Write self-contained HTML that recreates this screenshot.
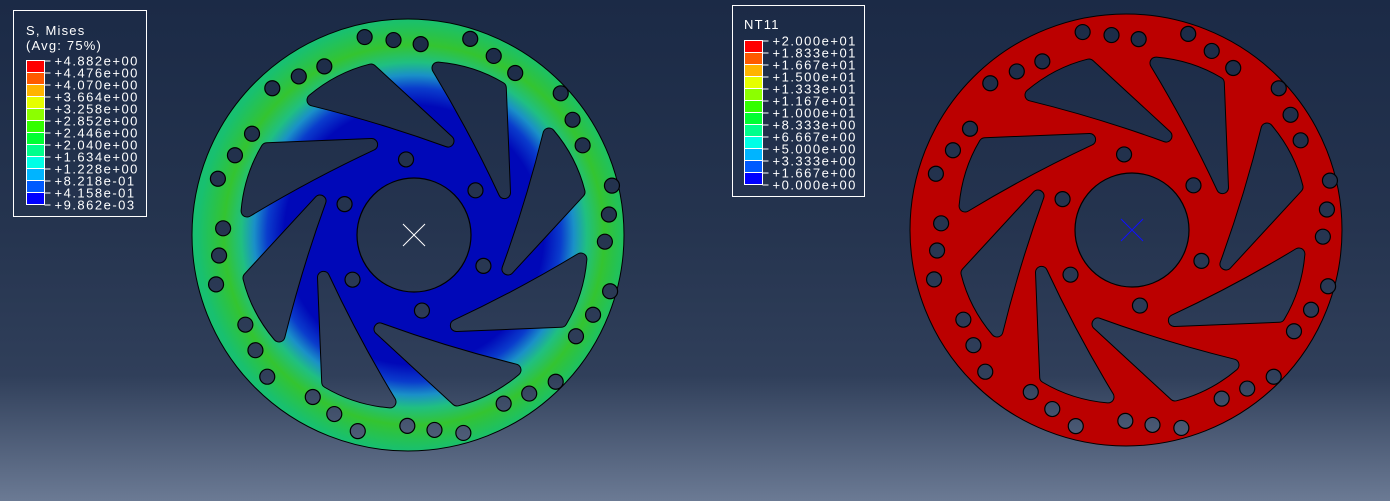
<!DOCTYPE html>
<html><head><meta charset="utf-8">
<style>
html,body{margin:0;padding:0;width:1390px;height:501px;overflow:hidden;}
body{background:linear-gradient(#1b2a46 0%,#25344f 45%,#303f5a 75%,#6b7a94 100%);font-family:"Liberation Sans",sans-serif;}
svg{position:absolute;left:0;top:0;}
</style></head><body>
<svg id="s" width="1390" height="501" xmlns="http://www.w3.org/2000/svg">
<defs>
<linearGradient id="bg" gradientUnits="userSpaceOnUse" x1="0" y1="0" x2="0" y2="501">
<stop offset="0" stop-color="#1b2a46"/><stop offset="0.45" stop-color="#25344f"/><stop offset="0.75" stop-color="#303f5a"/><stop offset="1" stop-color="#6b7a94"/>
</linearGradient>
<radialGradient id="fe" cx="414" cy="235" r="216" gradientUnits="userSpaceOnUse">
<stop offset="0" stop-color="#0008b8"/><stop offset="0.6" stop-color="#0008b8"/><stop offset="0.68" stop-color="#0a3ccc"/><stop offset="0.74" stop-color="#1a90c8"/><stop offset="0.8" stop-color="#20c080"/><stop offset="0.88" stop-color="#34c430"/><stop offset="1" stop-color="#18c070"/>
</radialGradient>
</defs>
<g font-size="13" fill="#fff" font-family="Liberation Sans, sans-serif" letter-spacing="1.2">
<rect x="13.5" y="10.5" width="133" height="206" fill="none" stroke="#fff"/>
<text x="26" y="35">S, Mises</text><text x="26" y="50">(Avg: 75%)</text>
<rect x="732.5" y="5.5" width="132" height="191" fill="none" stroke="#fff"/>
<text x="744" y="29">NT11</text>
</g>
<g id="L"></g>
</svg>
<script>
var s=document.getElementById('L'),NS='http://www.w3.org/2000/svg';
function el(t,a){var e=document.createElementNS(NS,t);for(var k in a)e.setAttribute(k,a[k]);s.appendChild(e);return e;}
var cols=['#ff0000','#ff5a00','#ffb400','#e6ff00','#8cff00','#32ff00','#00ff32','#00ff8c','#00ffe6','#00b4ff','#005aff','#0000ff'];
function legend(x,y,labels){
 for(var i=0;i<12;i++){el('rect',{x:x,y:y+i*12,width:18,height:12,fill:cols[i],stroke:'#fff','stroke-width':1});}
 for(var i=0;i<13;i++){el('line',{x1:x+18,y1:y+i*12+.5,x2:x+24,y2:y+i*12+.5,stroke:'#fff'});
  var t=el('text',{x:x+28,y:y+i*12+5,fill:'#fff','font-size':'13','font-family':'Liberation Sans, sans-serif','letter-spacing':'1.5'});t.textContent=labels[i];}
}
legend(26.5,60.5,['+4.882e+00','+4.476e+00','+4.070e+00','+3.664e+00','+3.258e+00','+2.852e+00','+2.446e+00','+2.040e+00','+1.634e+00','+1.228e+00','+8.218e-01','+4.158e-01','+9.862e-03']);
legend(744.5,40.5,['+2.000e+01','+1.833e+01','+1.667e+01','+1.500e+01','+1.333e+01','+1.167e+01','+1.000e+01','+8.333e+00','+6.667e+00','+5.000e+00','+3.333e+00','+1.667e+00','+0.000e+00']);
function rot(p,a){var c=Math.cos(a),n=Math.sin(a);return [p[0]*c-p[1]*n,p[0]*n+p[1]*c];}
function disc(cx,cy,ox,fill,xc){
 el('circle',{cx:ox,cy:cy,r:216,fill:fill,stroke:'#000','stroke-width':1});
 var pts=[[-43,-165],[34,-94],[-32,-118],[-101,-135],[-75,-157]];
 for(var k=0;k<8;k++){var a=k*Math.PI/4;
  var q=pts.map(function(p){var r=rot(p,a);return (cx+r[0]).toFixed(1)+' '+(cy+r[1]).toFixed(1);});
  var d='M'+q[0]+'L'+q[1]+'Q'+q[2]+' '+q[3]+'Q'+q[4]+' '+q[0]+'Z';
  el('path',{d:d,fill:'none',stroke:'#000','stroke-width':13,'stroke-linejoin':'round'});
  el('path',{d:d,fill:'url(#bg)',stroke:'url(#bg)','stroke-width':11,'stroke-linejoin':'round'});}
 var rs=[204,196,191];
 for(var g=0;g<12;g++){for(var j=0;j<3;j++){var an=(-14+g*30+j*8)*Math.PI/180;
  el('circle',{cx:cx+rs[j]*Math.sin(an),cy:cy-rs[j]*Math.cos(an),r:7.5,fill:'url(#bg)',stroke:'#000','stroke-width':1.2});}}
 for(var g=0;g<6;g++){var an=(-6+g*60)*Math.PI/180;
  el('circle',{cx:cx+76*Math.sin(an),cy:cy-76*Math.cos(an),r:7.5,fill:'url(#bg)',stroke:'#000','stroke-width':1.2});}
 el('circle',{cx:cx,cy:cy,r:57,fill:'url(#bg)',stroke:'#000','stroke-width':1.2});
 el('path',{d:'M'+(cx-11)+' '+(cy-11)+'L'+(cx+11)+' '+(cy+11)+'M'+(cx+11)+' '+(cy-11)+'L'+(cx-11)+' '+(cy+11),stroke:xc,'stroke-width':1});
}
disc(414,235,408,'url(#fe)','#fff');
disc(1132,230,1126,'#bb0000','#1010ff');
</script>
</body></html>
